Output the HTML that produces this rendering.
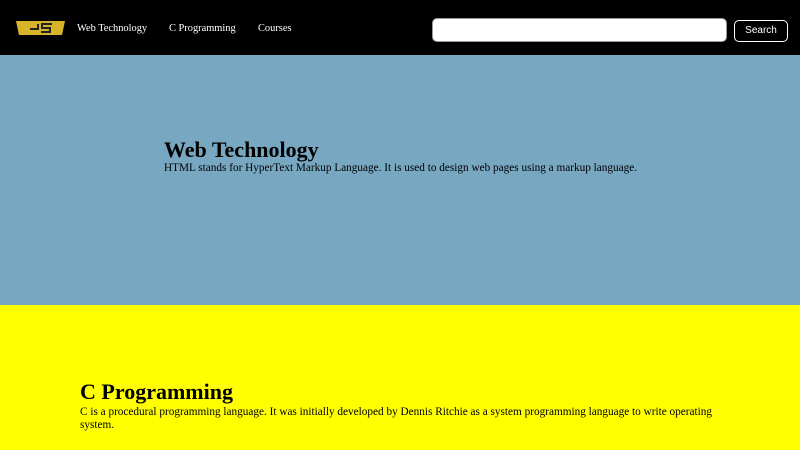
<!DOCTYPE html>
<html><head><style>
body{margin:0;width:800px;height:450px;overflow:hidden;font-family:"Liberation Serif",serif;}
nav{position:absolute;left:0;top:0;width:800px;height:55px;background:#000;}
.logo{position:absolute;left:16px;top:21px;}
nav a{position:absolute;top:23px;color:#fff;font-size:10.4px;}
.inp{position:absolute;left:432px;top:18px;width:293px;height:22px;background:#fff;border:1px solid #999;border-radius:5px;}
.btn{position:absolute;left:734px;top:20px;width:52px;height:20px;border:1px solid #fff;border-radius:5px;color:#fff;font:10px "Liberation Sans",sans-serif;text-align:center;line-height:20px;}
.s1{position:absolute;left:0;top:55px;width:800px;height:250px;background:#77a7c1;}
.s2{position:absolute;left:0;top:305px;width:800px;height:145px;background:#ffff00;}
h2{margin:0;font-size:22px;font-weight:bold;position:absolute;}
p{margin:0;font-size:11.25px;position:absolute;line-height:13px;}
</style></head><body>
<nav>
<svg class="logo" width="49" height="14" viewBox="0 0 49 14"><path d="M0 0H49L46 14H3Z" fill="#d8b42a"/><path d="M14 8H22V3" stroke="#222" stroke-width="2" fill="none"/><path d="M36 3H26V7H34V11H25" stroke="#222" stroke-width="2" fill="none"/></svg>
<a style="left:77px">Web Technology</a>
<a style="left:169px">C Programming</a>
<a style="left:258px">Courses</a>
<div class="inp"></div><div class="btn">Search</div>
</nav>
<div class="s1"><h2 style="left:164px;top:82px">Web Technology</h2><p style="left:164px;top:107px">HTML stands for HyperText Markup Language. It is used to design web pages using a markup language.</p></div>
<div class="s2"><h2 style="left:80px;top:74px">C Programming</h2><p style="left:80px;top:101px;width:650px">C is a procedural programming language. It was initially developed by Dennis Ritchie as a system programming language to write operating system.</p></div>
</body></html>
